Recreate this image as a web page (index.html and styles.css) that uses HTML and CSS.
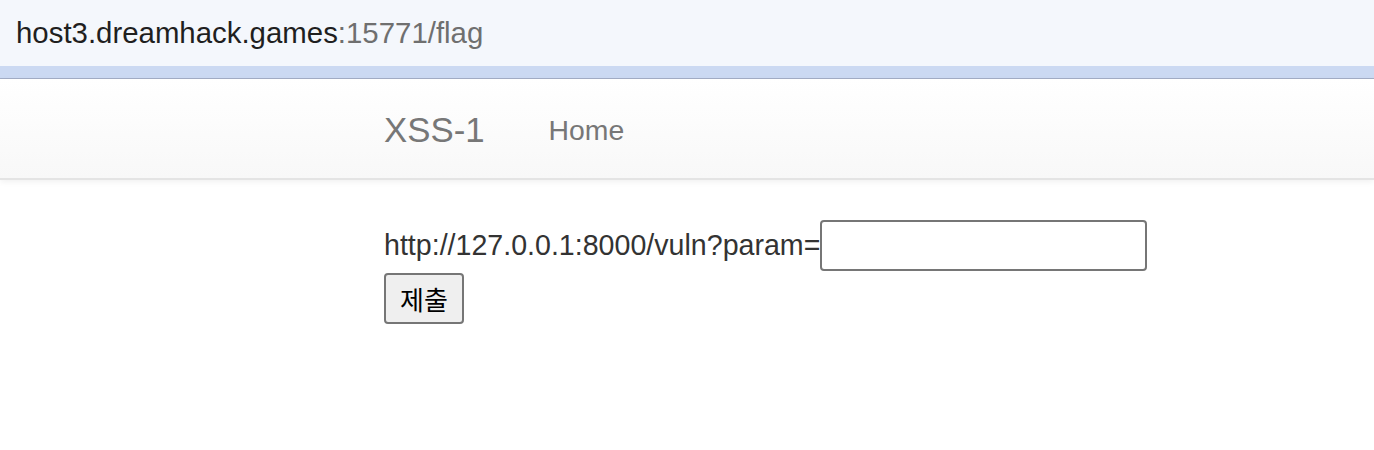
FILE: index.html
```html
<!DOCTYPE html>
<html>
<head>
<meta charset="utf-8">
<link rel="stylesheet" href="styles.css">
</head>
<body>
<div class="addr">
  <span class="host">host3.dreamhack.games</span><span class="path">:15771/flag</span>
</div>
<div class="band"></div>
<nav class="navbar">
  <div class="container nav-inner">
    <span class="brand">XSS-1</span>
    <span class="navlink">Home</span>
  </div>
</nav>
<main class="container content">
  <form class="form">
    <div class="row">
      <span class="label">http://127.0.0.1:8000/vuln?param=</span><input class="field" type="text">
    </div>
    <button class="submit" type="button">제출</button>
  </form>
</main>
</body>
</html>
```
FILE: styles.css
```css
html, body {
  margin: 0;
  padding: 0;
  background: #ffffff;
  font-family: "Liberation Sans", Arial, "Noto Sans CJK KR", sans-serif;
}
.addr {
  height: 66px;
  background: #f4f7fc;
  display: flex;
  align-items: center;
  padding-left: 16px;
  font-size: 29.4px;
  box-sizing: border-box;
}
.host { color: #1f1f1f; }
.path { color: #6f6f6f; }
.band {
  height: 12px;
  background: #cbd9f2;
  border-bottom: 1px solid #a3aec6;
}
.navbar {
  height: 101px;
  box-sizing: border-box;
  background: linear-gradient(to bottom, #ffffff 0%, #f8f8f8 100%);
  border-bottom: 2px solid #e4e4e4;
  box-shadow: 0 2px 6px rgba(0,0,0,0.06);
}
.container {
  padding-left: 384px;
}
.nav-inner {
  height: 100%;
  box-sizing: border-box;
  padding-top: 3px;
  display: flex;
  align-items: center;
}
.brand {
  color: #777777;
  font-size: 34.8px;
  margin-right: 64px;
}
.navlink {
  color: #777777;
  font-size: 28.4px;
}
.content {
  padding-top: 40px;
}
.row {
  display: flex;
  align-items: center;
}
.label {
  color: #333333;
  font-size: 28.6px;
}
.field {
  width: 327px;
  height: 51px;
  box-sizing: border-box;
  border: 2px solid #767676;
  border-radius: 4px;
  margin: 0;
  padding: 0;
  background: #fff;
}
.submit {
  margin-top: 2px;
  width: 80px;
  height: 51px;
  box-sizing: border-box;
  border: 2px solid #767676;
  border-radius: 4px;
  background: #efefef;
  color: #000;
  font-family: "Noto Sans CJK KR", sans-serif;
  font-size: 26px;
  padding: 0;
}
```
